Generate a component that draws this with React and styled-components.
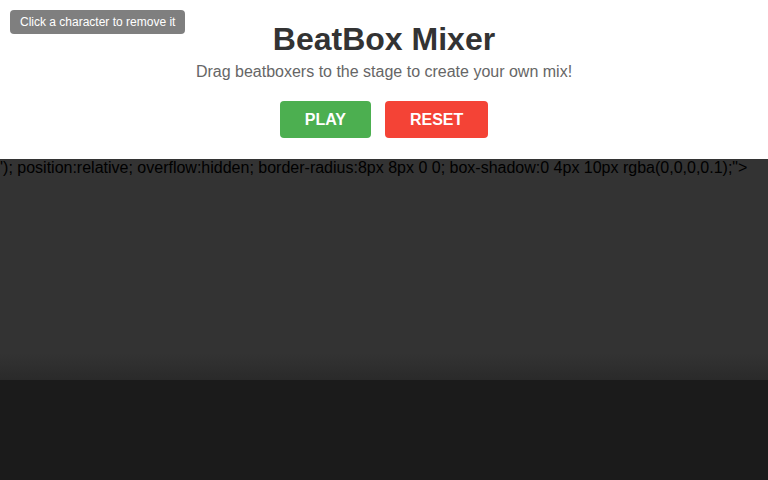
import React from 'react';
import styled, { createGlobalStyle } from 'styled-components';

const GlobalStyle = createGlobalStyle`
  html, body {
    margin: 0;
    padding: 0;
    background: #ffffff;
    font-family: 'Liberation Sans', Arial, sans-serif;
  }
`;

const App = () => {
  return (
    <Page>
      <GlobalStyle />
      <Tooltip>Click a character to remove it</Tooltip>
      <Header>
        <Title>BeatBox Mixer</Title>
        <Subtitle>Drag beatboxers to the stage to create your own mix!</Subtitle>
        <Controls>
          <ActionButton $color="#4caf50">PLAY</ActionButton>
          <ActionButton $color="#f44336">RESET</ActionButton>
        </Controls>
      </Header>
      <Stage>
        <StrayText>'); position:relative; overflow:hidden; border-radius:8px 8px 0 0; box-shadow:0 4px 10px rgba(0,0,0,0.1);"&gt;</StrayText>
      </Stage>
      <Tray />
    </Page>
  );
};

export default App;

const Page = styled.div`
  display: flex;
  flex-direction: column;
  width: 768px;
  height: 480px;
  overflow: hidden;
  position: relative;
`;

const Tooltip = styled.div`
  position: absolute;
  top: 10px;
  left: 10px;
  height: 24px;
  line-height: 24px;
  padding: 0 10px;
  border-radius: 4px;
  background: rgba(0, 0, 0, 0.5);
  color: #ffffff;
  font-size: 12px;
`;

const Header = styled.div`
  display: flex;
  flex-direction: column;
  align-items: center;
  padding-top: 20px;
  height: 159px;
  box-sizing: border-box;
`;

const Title = styled.h1`
  margin: 0;
  font-size: 32px;
  font-weight: bold;
  color: #333333;
  line-height: 38px;
`;

const Subtitle = styled.p`
  margin: 4px 0 0;
  font-size: 16px;
  color: #666666;
  line-height: 20px;
`;

const Controls = styled.div`
  display: flex;
  gap: 14px;
  margin-top: 19px;
`;

const ActionButton = styled.button`
  height: 37px;
  padding: 0 25px;
  border: none;
  border-radius: 4px;
  background: ${(p) => p.$color};
  color: #ffffff;
  font-family: 'Liberation Sans', Arial, sans-serif;
  font-size: 16px;
  font-weight: bold;
  cursor: pointer;
`;

const Stage = styled.div`
  height: 221px;
  background: linear-gradient(to bottom, #333333 0%, #333333 88%, #2a2a2a 100%);
`;

const StrayText = styled.div`
  font-size: 16px;
  line-height: 18px;
  color: #000000;
  white-space: nowrap;
`;

const Tray = styled.div`
  flex: 1;
  background: #1b1b1b;
`;
